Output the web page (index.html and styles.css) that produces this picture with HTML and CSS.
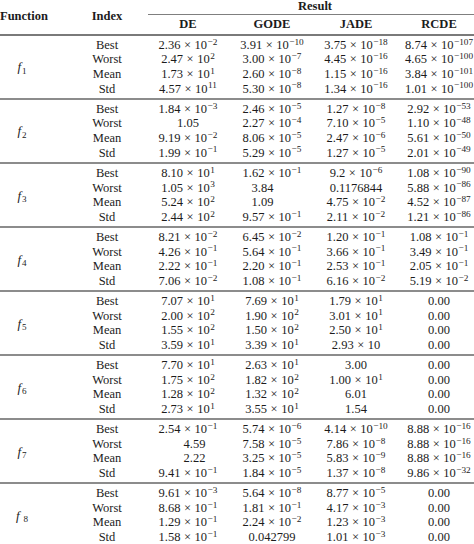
FILE: index.html
```html
<!DOCTYPE html>
<html lang="en">
<head>
<meta charset="utf-8">
<title>Result table</title>
<link rel="stylesheet" href="styles.css">
</head>
<body>
<table class="tbl">
  <colgroup>
    <col class="c-fn"><col class="c-ix"><col class="c-de"><col class="c-go"><col class="c-ja"><col class="c-rc">
  </colgroup>
  <thead>
    <tr>
      <th class="fn hd" rowspan="2">Function</th>
      <th class="ix hd" rowspan="2">Index</th>
      <th class="res" colspan="4">Result</th>
    </tr>
    <tr>
      <th class="alg">DE</th>
      <th class="alg">GODE</th>
      <th class="alg">JADE</th>
      <th class="alg">RCDE</th>
    </tr>
  </thead>
  <tbody class="grp">
    <tr><td class="fn" rowspan="4"><i>f</i><sub>1</sub></td><td class="ix">Best</td><td>2.36<span class="x">×</span>10<sup>−2</sup></td><td>3.91<span class="x">×</span>10<sup>−10</sup></td><td>3.75<span class="x">×</span>10<sup>−18</sup></td><td>8.74<span class="x">×</span>10<sup>−107</sup></td></tr>
    <tr><td class="ix">Worst</td><td>2.47<span class="x">×</span>10<sup>2</sup></td><td>3.00<span class="x">×</span>10<sup>−7</sup></td><td>4.45<span class="x">×</span>10<sup>−16</sup></td><td>4.65<span class="x">×</span>10<sup>−100</sup></td></tr>
    <tr><td class="ix">Mean</td><td>1.73<span class="x">×</span>10<sup>1</sup></td><td>2.60<span class="x">×</span>10<sup>−8</sup></td><td>1.15<span class="x">×</span>10<sup>−16</sup></td><td>3.84<span class="x">×</span>10<sup>−101</sup></td></tr>
    <tr><td class="ix">Std</td><td>4.57<span class="x">×</span>10<sup>11</sup></td><td>5.30<span class="x">×</span>10<sup>−8</sup></td><td>1.34<span class="x">×</span>10<sup>−16</sup></td><td>1.01<span class="x">×</span>10<sup>−100</sup></td></tr>
  </tbody>
  <tbody class="grp">
    <tr><td class="fn" rowspan="4"><i>f</i><sub>2</sub></td><td class="ix">Best</td><td>1.84<span class="x">×</span>10<sup>−3</sup></td><td>2.46<span class="x">×</span>10<sup>−5</sup></td><td>1.27<span class="x">×</span>10<sup>−8</sup></td><td>2.92<span class="x">×</span>10<sup>−53</sup></td></tr>
    <tr><td class="ix">Worst</td><td>1.05</td><td>2.27<span class="x">×</span>10<sup>−4</sup></td><td>7.10<span class="x">×</span>10<sup>−5</sup></td><td>1.10<span class="x">×</span>10<sup>−48</sup></td></tr>
    <tr><td class="ix">Mean</td><td>9.19<span class="x">×</span>10<sup>−2</sup></td><td>8.06<span class="x">×</span>10<sup>−5</sup></td><td>2.47<span class="x">×</span>10<sup>−6</sup></td><td>5.61<span class="x">×</span>10<sup>−50</sup></td></tr>
    <tr><td class="ix">Std</td><td>1.99<span class="x">×</span>10<sup>−1</sup></td><td>5.29<span class="x">×</span>10<sup>−5</sup></td><td>1.27<span class="x">×</span>10<sup>−5</sup></td><td>2.01<span class="x">×</span>10<sup>−49</sup></td></tr>
  </tbody>
  <tbody class="grp">
    <tr><td class="fn" rowspan="4"><i>f</i><sub>3</sub></td><td class="ix">Best</td><td>8.10<span class="x">×</span>10<sup>1</sup></td><td>1.62<span class="x">×</span>10<sup>−1</sup></td><td>9.2<span class="x">×</span>10<sup>−6</sup></td><td>1.08<span class="x">×</span>10<sup>−90</sup></td></tr>
    <tr><td class="ix">Worst</td><td>1.05<span class="x">×</span>10<sup>3</sup></td><td class="shl">3.84</td><td>0.1176844</td><td>5.88<span class="x">×</span>10<sup>−86</sup></td></tr>
    <tr><td class="ix">Mean</td><td>5.24<span class="x">×</span>10<sup>2</sup></td><td class="shl">1.09</td><td>4.75<span class="x">×</span>10<sup>−2</sup></td><td>4.52<span class="x">×</span>10<sup>−87</sup></td></tr>
    <tr><td class="ix">Std</td><td>2.44<span class="x">×</span>10<sup>2</sup></td><td>9.57<span class="x">×</span>10<sup>−1</sup></td><td>2.11<span class="x">×</span>10<sup>−2</sup></td><td>1.21<span class="x">×</span>10<sup>−86</sup></td></tr>
  </tbody>
  <tbody class="grp">
    <tr><td class="fn" rowspan="4"><i>f</i><sub>4</sub></td><td class="ix">Best</td><td>8.21<span class="x">×</span>10<sup>−2</sup></td><td>6.45<span class="x">×</span>10<sup>−2</sup></td><td>1.20<span class="x">×</span>10<sup>−1</sup></td><td>1.08<span class="x">×</span>10<sup>−1</sup></td></tr>
    <tr><td class="ix">Worst</td><td>4.26<span class="x">×</span>10<sup>−1</sup></td><td>5.64<span class="x">×</span>10<sup>−1</sup></td><td>3.66<span class="x">×</span>10<sup>−1</sup></td><td>3.49<span class="x">×</span>10<sup>−1</sup></td></tr>
    <tr><td class="ix">Mean</td><td>2.22<span class="x">×</span>10<sup>−1</sup></td><td>2.20<span class="x">×</span>10<sup>−1</sup></td><td>2.53<span class="x">×</span>10<sup>−1</sup></td><td>2.05<span class="x">×</span>10<sup>−1</sup></td></tr>
    <tr><td class="ix">Std</td><td>7.06<span class="x">×</span>10<sup>−2</sup></td><td>1.08<span class="x">×</span>10<sup>−1</sup></td><td>6.16<span class="x">×</span>10<sup>−2</sup></td><td>5.19<span class="x">×</span>10<sup>−2</sup></td></tr>
  </tbody>
  <tbody class="grp">
    <tr><td class="fn" rowspan="4"><i>f</i><sub>5</sub></td><td class="ix">Best</td><td>7.07<span class="x">×</span>10<sup>1</sup></td><td>7.69<span class="x">×</span>10<sup>1</sup></td><td>1.79<span class="x">×</span>10<sup>1</sup></td><td>0.00</td></tr>
    <tr><td class="ix">Worst</td><td>2.00<span class="x">×</span>10<sup>2</sup></td><td>1.90<span class="x">×</span>10<sup>2</sup></td><td>3.01<span class="x">×</span>10<sup>1</sup></td><td>0.00</td></tr>
    <tr><td class="ix">Mean</td><td>1.55<span class="x">×</span>10<sup>2</sup></td><td>1.50<span class="x">×</span>10<sup>2</sup></td><td>2.50<span class="x">×</span>10<sup>1</sup></td><td>0.00</td></tr>
    <tr><td class="ix">Std</td><td>3.59<span class="x">×</span>10<sup>1</sup></td><td>3.39<span class="x">×</span>10<sup>1</sup></td><td>2.93<span class="x">×</span>10</td><td>0.00</td></tr>
  </tbody>
  <tbody class="grp">
    <tr><td class="fn" rowspan="4"><i>f</i><sub>6</sub></td><td class="ix">Best</td><td>7.70<span class="x">×</span>10<sup>1</sup></td><td>2.63<span class="x">×</span>10<sup>1</sup></td><td>3.00</td><td>0.00</td></tr>
    <tr><td class="ix">Worst</td><td>1.75<span class="x">×</span>10<sup>2</sup></td><td>1.82<span class="x">×</span>10<sup>2</sup></td><td>1.00<span class="x">×</span>10<sup>1</sup></td><td>0.00</td></tr>
    <tr><td class="ix">Mean</td><td>1.28<span class="x">×</span>10<sup>2</sup></td><td>1.32<span class="x">×</span>10<sup>2</sup></td><td>6.01</td><td>0.00</td></tr>
    <tr><td class="ix">Std</td><td>2.73<span class="x">×</span>10<sup>1</sup></td><td>3.55<span class="x">×</span>10<sup>1</sup></td><td>1.54</td><td>0.00</td></tr>
  </tbody>
  <tbody class="grp">
    <tr><td class="fn" rowspan="4"><i>f</i><sub>7</sub></td><td class="ix">Best</td><td>2.54<span class="x">×</span>10<sup>−1</sup></td><td>5.74<span class="x">×</span>10<sup>−6</sup></td><td>4.14<span class="x">×</span>10<sup>−10</sup></td><td>8.88<span class="x">×</span>10<sup>−16</sup></td></tr>
    <tr><td class="ix">Worst</td><td class="shr">4.59</td><td>7.58<span class="x">×</span>10<sup>−5</sup></td><td>7.86<span class="x">×</span>10<sup>−8</sup></td><td>8.88<span class="x">×</span>10<sup>−16</sup></td></tr>
    <tr><td class="ix">Mean</td><td class="shr">2.22</td><td>3.25<span class="x">×</span>10<sup>−5</sup></td><td>5.83<span class="x">×</span>10<sup>−9</sup></td><td>8.88<span class="x">×</span>10<sup>−16</sup></td></tr>
    <tr><td class="ix">Std</td><td>9.41<span class="x">×</span>10<sup>−1</sup></td><td>1.84<span class="x">×</span>10<sup>−5</sup></td><td>1.37<span class="x">×</span>10<sup>−8</sup></td><td>9.86<span class="x">×</span>10<sup>−32</sup></td></tr>
  </tbody>
  <tbody class="grp">
    <tr><td class="fn" rowspan="4"><i>f</i><sub class="gap">8</sub></td><td class="ix">Best</td><td>9.61<span class="x">×</span>10<sup>−3</sup></td><td>5.64<span class="x">×</span>10<sup>−8</sup></td><td>8.77<span class="x">×</span>10<sup>−5</sup></td><td>0.00</td></tr>
    <tr><td class="ix">Worst</td><td>8.68<span class="x">×</span>10<sup>−1</sup></td><td>1.81<span class="x">×</span>10<sup>−1</sup></td><td>4.17<span class="x">×</span>10<sup>−3</sup></td><td>0.00</td></tr>
    <tr><td class="ix">Mean</td><td>1.29<span class="x">×</span>10<sup>−1</sup></td><td>2.24<span class="x">×</span>10<sup>−2</sup></td><td>1.23<span class="x">×</span>10<sup>−3</sup></td><td>0.00</td></tr>
    <tr><td class="ix">Std</td><td>1.58<span class="x">×</span>10<sup>−1</sup></td><td>0.042799</td><td>1.01<span class="x">×</span>10<sup>−3</sup></td><td>0.00</td></tr>
  </tbody>
</table>
</body>
</html>
```

FILE: styles.css
```css
html, body {
  margin: 0;
  padding: 0;
  overflow: hidden;
  background: #ffffff;
}

body {
  width: 474px;
  height: 544px;
  font-family: "Liberation Serif", "DejaVu Serif", serif;
  font-size: 12.5px;
  color: #1c1c1c;
}

.tbl {
  table-layout: fixed;
  width: 482px;
  border-collapse: separate;
  border-spacing: 0;
}

.c-fn { width: 44px; }
.c-ix { width: 104px; }
.c-de { width: 80px; }
.c-go { width: 88px; }
.c-ja { width: 80px; }
.c-rc { width: 86px; }

th, td {
  padding: 0;
  text-align: center;
  white-space: nowrap;
}

th {
  font-weight: bold;
  line-height: 13.8px;
}

th.hd {
  vertical-align: middle;
  border-bottom: 2px solid #7a7a7a;
}

th.res {
  padding-bottom: 0;
  border-bottom: 1px solid #7f7f7f;
}

th.alg {
  padding-top: 3.5px;
  padding-bottom: 1.5px;
  border-bottom: 2px solid #7a7a7a;
}

.ix {
  padding-left: 22px;
}

td {
  line-height: 14.6px;
}

td.fn {
  vertical-align: middle;
  font-size: 13px;
  padding-top: 3px;
}

td.fn i {
  font-style: italic;
}

td.fn sub {
  font-size: 0.7em;
  line-height: 0;
  vertical-align: -0.25em;
  margin-left: 1px;
}

td.fn sub.gap {
  margin-left: 4px;
}

.grp tr:first-child td {
  padding-top: 2.2px;
}

.grp tr:last-child td {
  padding-bottom: 1.5px;
}

.grp + .grp tr:first-child td {
  border-top: 2px solid #8c8c8c;
}

.x {
  margin: 0 3.5px;
}

sup {
  font-size: 0.74em;
  line-height: 0;
  vertical-align: 0.45em;
  margin-left: 0.5px;
}

.shl {
  padding-right: 19px;
}

.shr {
  padding-left: 13px;
}
```
